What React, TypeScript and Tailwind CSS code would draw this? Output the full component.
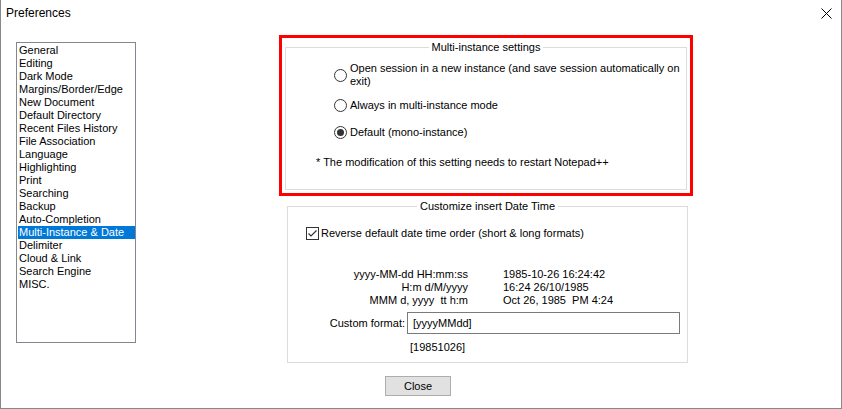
import React from "react";

const items = [
  "General",
  "Editing",
  "Dark Mode",
  "Margins/Border/Edge",
  "New Document",
  "Default Directory",
  "Recent Files History",
  "File Association",
  "Language",
  "Highlighting",
  "Print",
  "Searching",
  "Backup",
  "Auto-Completion",
  "Multi-Instance & Date",
  "Delimiter",
  "Cloud & Link",
  "Search Engine",
  "MISC.",
];

const font = { fontFamily: '"Liberation Sans", Arial, sans-serif' };

function Radio({ checked }: { checked?: boolean }) {
  return (
    <svg width="13" height="13" viewBox="0 0 13 13" className="shrink-0">
      <circle cx="6.5" cy="6.5" r="6" fill="#fff" stroke="#333" strokeWidth="1" />
      {checked && <circle cx="6.5" cy="6.5" r="3.5" fill="#333" />}
    </svg>
  );
}

function Check() {
  return (
    <svg width="13" height="13" viewBox="0 0 13 13" className="shrink-0">
      <rect x="0.5" y="0.5" width="12" height="12" fill="#fff" stroke="#333" />
      <path d="M2.5 6.5 L5 9 L10.5 3.5" fill="none" stroke="#333" strokeWidth="1.2" />
    </svg>
  );
}

export default function App() {
  return (
    <div
      className="w-[842px] h-[409px] bg-white border-l border-r border-b border-[#888] text-black text-[11px] leading-[13px] flex flex-col overflow-hidden"
      style={font}
    >
      <div className="h-[26px] shrink-0 flex items-center justify-between pl-[5px] pr-[9px]">
        <span className="text-[12px] leading-[14px]">Preferences</span>
        <svg width="11" height="11" viewBox="0 0 11 11">
          <path d="M0.5 0.5 L10.5 10.5 M10.5 0.5 L0.5 10.5" stroke="#000" strokeWidth="1" />
        </svg>
      </div>
      <div className="flex pt-[9px] pl-[15px]">
        <div className="mt-[7px] w-[120px] h-[301px] border border-[#828790] pt-[1px] pl-[1px] flex flex-col">
          {items.map((it) => (
            <div
              key={it}
              className={
                "h-[13px] pl-[1px] whitespace-nowrap " +
                (it === "Multi-Instance & Date" ? "bg-[#0078d7] text-white" : "")
              }
            >
              {it}
            </div>
          ))}
        </div>
        <div className="ml-[143px] flex flex-col">
          <div className="w-[414px] h-[161px] border-[3px] border-[#ff0000] pt-[9px] pl-[3px] pr-[3px]">
            <div className="relative w-[402px] h-[143px] border border-[#dcdcdc] pt-[14px] flex flex-col">
              <div className="absolute left-0 right-0 top-[-7px] flex justify-center">
                <span className="bg-white px-[3px]">Multi-instance settings</span>
              </div>
              <div className="ml-[48px] flex items-center gap-[3px]">
                <Radio />
                <span>
                  Open session in a new instance (and save session automatically on
                  <br />
                  exit)
                </span>
              </div>
              <div className="ml-[48px] mt-[11px] flex items-center gap-[3px]">
                <Radio />
                <span>Always in multi-instance mode</span>
              </div>
              <div className="ml-[48px] mt-[14px] flex items-center gap-[3px]">
                <Radio checked />
                <span>Default (mono-instance)</span>
              </div>
              <div className="ml-[30px] mt-[17px]">* The modification of this setting needs to restart Notepad++</div>
            </div>
          </div>
          <div className="relative ml-[8px] mt-[10px] w-[401px] h-[157px] border border-[#dcdcdc] pt-[20px] flex flex-col">
            <div className="absolute left-0 right-0 top-[-7px] flex justify-center">
              <span className="bg-white px-[3px]">Customize insert Date Time</span>
            </div>
            <div className="ml-[18px] flex items-center gap-[2px]">
              <Check />
              <span>Reverse default date time order (short &amp; long formats)</span>
            </div>
            <div className="mt-[28px] flex flex-col">
              {[
                ["yyyy-MM-dd HH:mm:ss", "1985-10-26 16:24:42"],
                ["H:m d/M/yyyy", "16:24 26/10/1985"],
                ["MMM d, yyyy  tt h:m", "Oct 26, 1985  PM 4:24"],
              ].map(([a, b]) => (
                <div key={a} className="flex h-[13px]">
                  <div className="w-[180px] text-right whitespace-pre">{a}</div>
                  <div className="ml-[35px] whitespace-pre">{b}</div>
                </div>
              ))}
            </div>
            <div className="mt-[5px] flex items-center">
              <div className="w-[117px] text-right">Custom format:</div>
              <div className="ml-[2px] w-[273px] h-[22px] border border-[#7a7a7a] flex items-center pl-[5px]">
                [yyyyMMdd]
              </div>
            </div>
            <div className="ml-[122px] mt-[7px]">[19851026]</div>
          </div>
          <div className="ml-[106px] mt-[13px] w-[66px] h-[20px] bg-[#e1e1e1] border border-[#adadad] flex items-center justify-center">
            Close
          </div>
        </div>
      </div>
    </div>
  );
}
